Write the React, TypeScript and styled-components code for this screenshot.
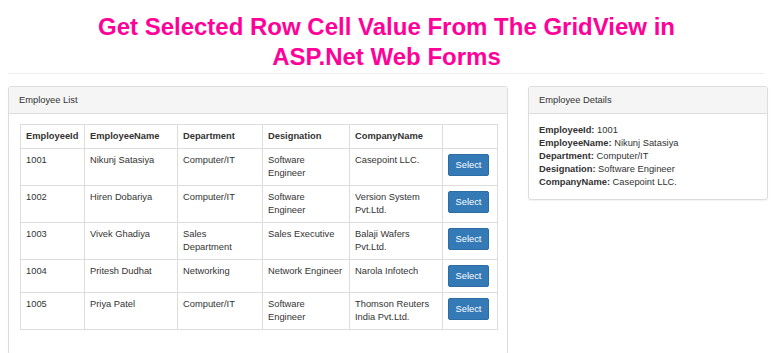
import React, { useState } from "react"
import styled, { createGlobalStyle } from "styled-components"

type Employee = {
	id: number
	name: string
	department: string
	designation: string
	company: string
}

const employees: Employee[] = [
	{ id: 1001, name: "Nikunj Satasiya", department: "Computer/IT", designation: "Software Engineer", company: "Casepoint LLC." },
	{ id: 1002, name: "Hiren Dobariya", department: "Computer/IT", designation: "Software Engineer", company: "Version System Pvt.Ltd." },
	{ id: 1003, name: "Vivek Ghadiya", department: "Sales Department", designation: "Sales Executive", company: "Balaji Wafers Pvt.Ltd." },
	{ id: 1004, name: "Pritesh Dudhat", department: "Networking", designation: "Network Engineer", company: "Narola Infotech" },
	{ id: 1005, name: "Priya Patel", department: "Computer/IT", designation: "Software Engineer", company: "Thomson Reuters India Pvt.Ltd." }
]

const columnWidths = [64, 93, 85, 87, 93, 55]

const GlobalStyle = createGlobalStyle`
	body {
		margin: 0;
		background: #fff;
		color: #333;
		font-family: "Liberation Sans", Arial, sans-serif;
		font-size: 9.33px;
		line-height: 13px;
	}
`

const Page = styled.div`
	padding: 12px 8px 0;
`

const Title = styled.h1`
	margin: 0;
	color: #ff0099;
	font-size: 24px;
	font-weight: bold;
	line-height: 30px;
	text-align: center;
`

const Divider = styled.hr`
	border: 0;
	border-top: 1px solid #eee;
	margin: 1px 0 12px;
`

const PanelRow = styled.div`
	display: grid;
	grid-template-columns: 500px 240px;
	gap: 20px;
	align-items: start;
`

const Panel = styled.div`
	background: #fff;
	border: 1px solid #ddd;
	border-radius: 3px;
	box-shadow: 0 1px 1px rgba(0, 0, 0, 0.05);
`

const PanelHeading = styled.div`
	background: #f5f5f5;
	border-bottom: 1px solid #ddd;
	border-radius: 2px 2px 0 0;
	padding: 6.5px 10px;
`

const PanelBody = styled.div<{ $bottom?: number }>`
	padding: 10px 10px ${(p) => p.$bottom ?? 10}px 10px;
`

const Grid = styled.table`
	border-collapse: collapse;
	table-layout: fixed;
	width: 477px;
	margin-left: 1px;
`

const HeadCell = styled.th`
	border: 1px solid #ddd;
	padding: 5px;
	font-weight: bold;
	text-align: left;
	vertical-align: top;
`

const Cell = styled.td`
	border: 1px solid #ddd;
	padding: 5px;
	vertical-align: top;
`

const SelectButton = styled.button`
	display: block;
	height: 22px;
	padding: 0 6.5px;
	background: #337ab7;
	border: 1px solid #2e6da4;
	border-radius: 2px;
	color: #fff;
	font-family: inherit;
	font-size: 9.33px;
	line-height: 20px;
	cursor: pointer;

	&:hover {
		background: #286090;
	}
`

const DetailLine = styled.div`
	line-height: 13px;
`

const Label = styled.b`
	font-weight: bold;
`

const EmployeeDetails = ({ employee }: { employee: Employee }) => (
	<Panel>
		<PanelHeading>Employee Details</PanelHeading>
		<PanelBody>
			<DetailLine>
				<Label>EmployeeId:</Label> {employee.id}
			</DetailLine>
			<DetailLine>
				<Label>EmployeeName:</Label> {employee.name}
			</DetailLine>
			<DetailLine>
				<Label>Department:</Label> {employee.department}
			</DetailLine>
			<DetailLine>
				<Label>Designation:</Label> {employee.designation}
			</DetailLine>
			<DetailLine>
				<Label>CompanyName:</Label> {employee.company}
			</DetailLine>
		</PanelBody>
	</Panel>
)

const App = () => {
	const [selected, setSelected] = useState<Employee>(employees[0])

	return (
		<Page>
			<GlobalStyle />
			<Title>
				Get Selected Row Cell Value From The GridView in
				<br />
				ASP.Net Web Forms
			</Title>
			<Divider />
			<PanelRow>
				<Panel>
					<PanelHeading>Employee List</PanelHeading>
					<PanelBody $bottom={24}>
						<Grid>
							<colgroup>
								{columnWidths.map((w, i) => (
									<col key={i} style={{ width: w }} />
								))}
							</colgroup>
							<thead>
								<tr>
									<HeadCell>EmployeeId</HeadCell>
									<HeadCell>EmployeeName</HeadCell>
									<HeadCell>Department</HeadCell>
									<HeadCell>Designation</HeadCell>
									<HeadCell>CompanyName</HeadCell>
									<HeadCell>&nbsp;</HeadCell>
								</tr>
							</thead>
							<tbody>
								{employees.map((e) => (
									<tr key={e.id}>
										<Cell>{e.id}</Cell>
										<Cell>{e.name}</Cell>
										<Cell>{e.department}</Cell>
										<Cell>{e.designation}</Cell>
										<Cell>{e.company}</Cell>
										<Cell>
											<SelectButton onClick={() => setSelected(e)}>Select</SelectButton>
										</Cell>
									</tr>
								))}
							</tbody>
						</Grid>
					</PanelBody>
				</Panel>
				<EmployeeDetails employee={selected} />
			</PanelRow>
		</Page>
	)
}

export default App
